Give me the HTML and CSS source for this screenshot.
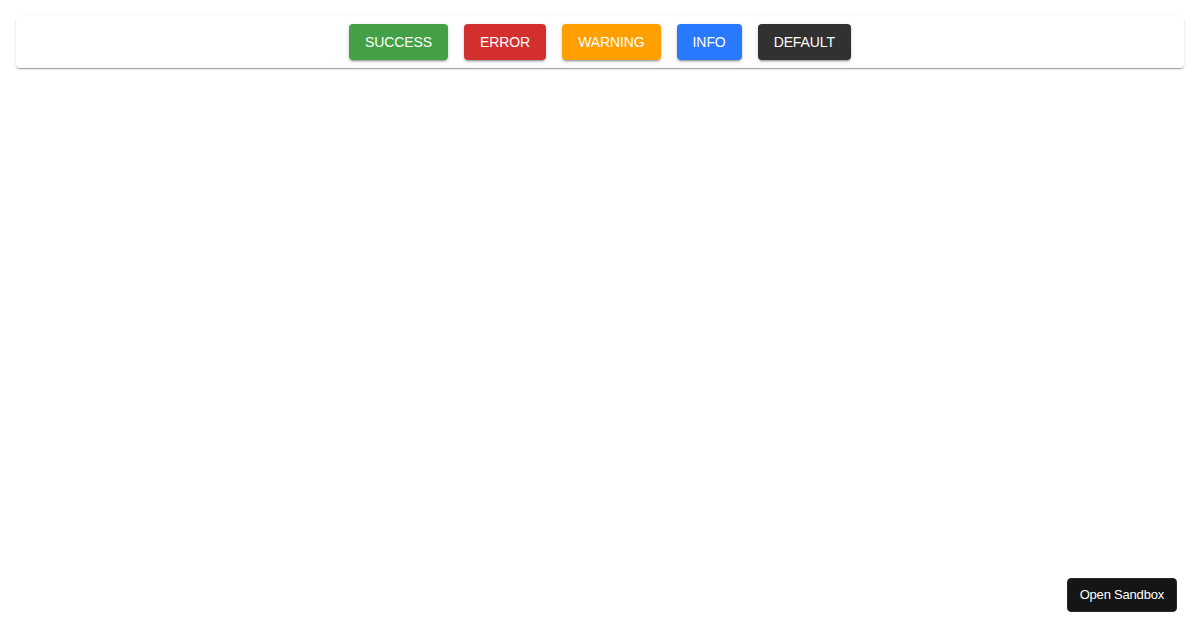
FILE: index.html
```html
<!DOCTYPE html>
<html>
<head>
<meta charset="utf-8">
<link rel="stylesheet" href="styles.css">
</head>
<body>
<div class="page">
  <div class="card">
    <button class="btn success">SUCCESS</button>
    <button class="btn error">ERROR</button>
    <button class="btn warning">WARNING</button>
    <button class="btn info">INFO</button>
    <button class="btn default">DEFAULT</button>
  </div>
</div>
<a class="sandbox">Open Sandbox</a>
</body>
</html>
```
FILE: styles.css
```css
html, body {
  margin: 0;
  padding: 0;
  background: #fff;
  font-family: "Liberation Sans", Arial, sans-serif;
}
.page {
  padding: 16px;
}
.card {
  display: flex;
  justify-content: center;
  gap: 16px;
  padding: 8px;
  background: #fff;
  border-radius: 4px;
  box-shadow: 0 2px 1px -1px rgba(0,0,0,0.2), 0 1px 1px 0 rgba(0,0,0,0.14), 0 1px 3px 0 rgba(0,0,0,0.12);
}
.btn {
  height: 36px;
  padding: 0 16px;
  border: none;
  border-radius: 4px;
  color: #fff;
  font-family: "Liberation Sans", Arial, sans-serif;
  font-size: 14px;
  letter-spacing: -0.1px;
  line-height: 36px;
  box-shadow: 0 3px 1px -2px rgba(0,0,0,0.2), 0 2px 2px 0 rgba(0,0,0,0.14), 0 1px 5px 0 rgba(0,0,0,0.12);
}
.success { background: #43a047; }
.error { background: #d32f2f; }
.warning { background: #ffa000; }
.info { background: #2979ff; }
.default { background: #313131; }
.sandbox {
  position: fixed;
  right: 23px;
  bottom: 18px;
  height: 34px;
  line-height: 32px;
  padding: 0 12px;
  box-sizing: border-box;
  background: #151515;
  border: 1px solid #2a2a2a;
  border-radius: 4px;
  color: #fff;
  font-size: 13px;
  letter-spacing: -0.2px;
}
```
